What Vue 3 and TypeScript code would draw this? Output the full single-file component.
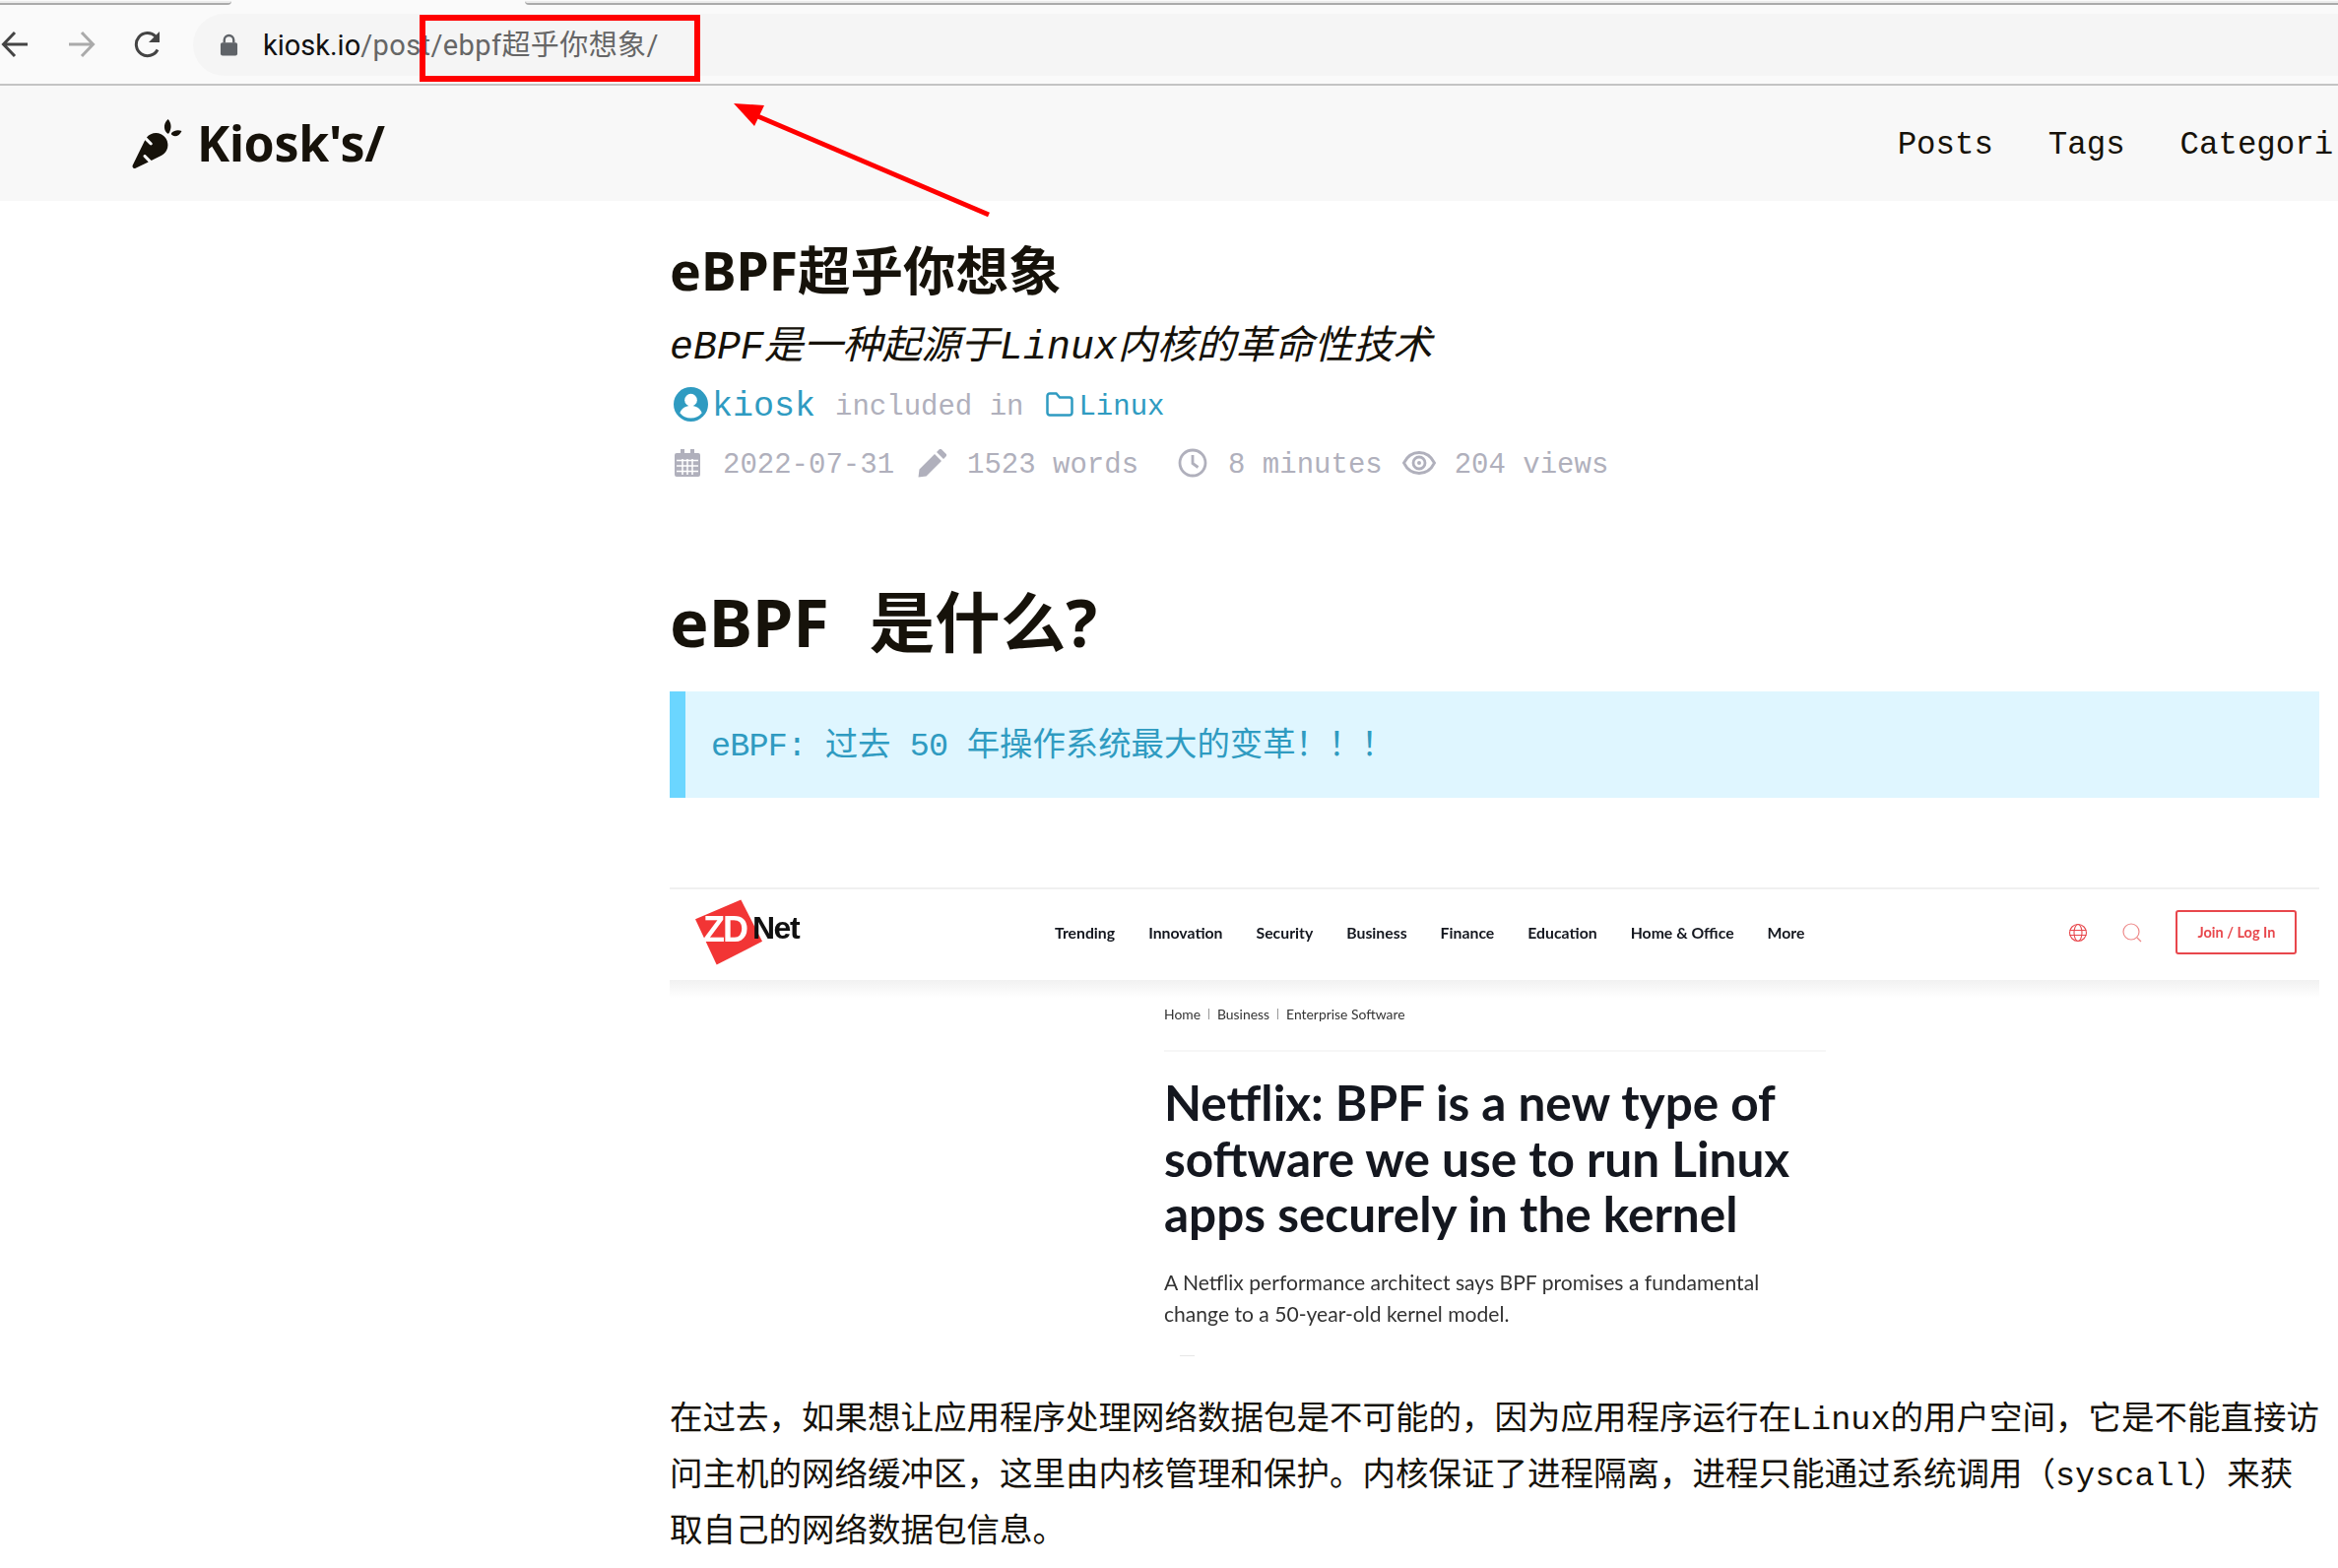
<script setup lang="ts">
const navItems: string[] = ['Posts', 'Tags', 'Categories']
const zdItems: string[] = ['Trending', 'Innovation', 'Security', 'Business', 'Finance', 'Education', 'Home & Office', 'More']
</script>

<template>
  <div class="page">
    <div class="tabstrip">
      <div class="tab-side tab-left"></div>
      <div class="tab-active"></div>
      <div class="tab-side tab-right"></div>
    </div>
    <div class="toolbar">
      <svg class="tb-icon back" viewBox="0 0 28 28"><path d="M27 14H3M14 2 2.500 14 14 26" fill="none" stroke="#444" stroke-width="3" /></svg>
      <svg class="tb-icon forward" viewBox="0 0 28 28"><path d="M1 14h24M14 2l11.500 12L14 26" fill="none" stroke="#aaa" stroke-width="3" /></svg>
      <svg class="tb-icon reload" viewBox="0 0 30 28"><path d="M25 19.500A11.500 11.500 0 1 1 23 6" fill="none" stroke="#444" stroke-width="3" /><path d="M27 1v11H16z" fill="#444" /></svg>
      <div class="omnibox">
        <svg class="lock" viewBox="0 0 20 24"><path d="M5 10V7a5 5 0 0 1 10 0v3" fill="none" stroke="#5f6368" stroke-width="2.500" /><rect x="1" y="9.500" width="18" height="14" rx="2" fill="#5f6368" /></svg>
        <span class="url"><span class="url-host">kiosk.io</span><span class="url-path">/post/ebpf超乎你想象/</span></span>
      </div>
    </div>

    <header class="site-header">
      <a class="logo">
        <svg class="carrot" viewBox="0 0 512 512"><path d="M298.200 156.600c-52.700-25.700-114.500-10.500-150.200 32.800l55.200 55.200c6.200 6.200 6.200 16.400 0 22.600-3.100 3.100-7.200 4.700-11.300 4.700s-8.200-1.600-11.300-4.700L130.400 217 2.300 479.700c-2.900 6-3.100 13.300 0 19.700 5.400 11.100 18.900 15.700 30 10.300l133.600-65.200-49.200-49.200c-6.200-6.200-6.200-16.400 0-22.600 6.200-6.200 16.400-6.200 22.600 0l57 57 102-49.800c24-11.700 44.500-31.300 57.100-57.100 30.100-61.700 4.500-136.100-57.200-166.200z" fill="#16120a" /><path d="M390.300 121.700C409.800 81 399.700 32.900 370.600 0c-43.500 36.800-51.100 97.100-17.200 139.200 10 12 24 22 36.900-17.500zM512 121.600c-38-14-80-6-104 18-8 9-4 20 6 27 33 22 76 5 98-45z" fill="#16120a" /></svg>
        <span class="logo-text">Kiosk's/</span>
      </a>
      <nav class="site-nav">
        <a v-for="item in navItems" :key="item">{{ item }}</a>
      </nav>
    </header>

    <main class="content">
      <h1 class="title">eBPF超乎你想象</h1>
      <div class="subtitle">eBPF是一种起源于Linux内核的革命性技术</div>
      <div class="meta-author">
        <svg class="author-icon" viewBox="0 0 36 36"><circle cx="18" cy="18" r="18" fill="#2f9bc1" /><circle cx="18" cy="13.500" r="6.500" fill="#fff" /><path d="M6.500 27c2-5.500 6-7.500 11.500-7.500S27.500 21.500 29.500 27A15 15 0 0 1 18 32.500 15 15 0 0 1 6.500 27z" fill="#fff" /></svg>
        <span class="author-name">kiosk</span>
        <span class="included">included in</span>
        <svg class="folder" viewBox="0 0 28 25"><path d="M1.500 4A2.500 2.500 0 0 1 4 1.500h6.500l3.500 4h10A2.500 2.500 0 0 1 26.500 8v13a2.500 2.500 0 0 1-2.500 2.500H4A2.500 2.500 0 0 1 1.500 21z" fill="none" stroke="#2f9bc1" stroke-width="2.500" /></svg>
        <span class="category">Linux</span>
      </div>
      <div class="meta-stats">
        <svg class="stat-icon calendar" viewBox="0 0 26 29"><path d="M2 5h4V1h4v4h6V1h4v4h4a2 2 0 0 1 2 2v20a2 2 0 0 1-2 2H2a2 2 0 0 1-2-2V7a2 2 0 0 1 2-2z" fill="#b0b0bc" /><path d="M2 12.500h22M2 18h22M2 23.500h22M8 11v16M13 11v16M18 11v16" stroke="#fff" stroke-width="1.500" /></svg>
        <span class="stat date">2022-07-31</span>
        <svg class="stat-icon pencil" viewBox="0 0 29 29"><path d="M17 5l7 7L8.500 27.500 0.500 28.500l1-8zM19 3l2.500-2.500a2 2 0 0 1 2.800 0L28.500 4.700a2 2 0 0 1 0 2.800L26 10z" fill="#b0b0bc" /></svg>
        <span class="stat words">1523 words</span>
        <svg class="stat-icon clock" viewBox="0 0 30 30"><circle cx="15" cy="15" r="13" fill="none" stroke="#b0b0bc" stroke-width="2.800" /><path d="M15 7v8.500l5.500 4" fill="none" stroke="#b0b0bc" stroke-width="2.800" /></svg>
        <span class="stat minutes">8 minutes</span>
        <svg class="stat-icon eye" viewBox="0 0 34 24"><path d="M1.500 12C5 5 10.500 1.500 17 1.500S29 5 32.500 12C29 19 23.500 22.500 17 22.500S5 19 1.500 12z" fill="none" stroke="#b0b0bc" stroke-width="2.800" /><circle cx="17" cy="12" r="6" fill="none" stroke="#b0b0bc" stroke-width="2.800" /><circle cx="17" cy="12" r="2" fill="#b0b0bc" /></svg>
        <span class="stat views">204 views</span>
      </div>

      <h2 class="heading"><span class="heading-latin">eBPF</span>是什么?</h2>

      <blockquote class="quote"><span class="quote-text"><span class="quote-latin">eBPF: </span>过去<span class="quote-latin"> 50 </span>年操作系统最大的变革！！！</span></blockquote>

      <figure class="shot">
        <div class="zd-header">
          <div class="zd-logo">
            <svg class="zd-diamond" viewBox="0 0 70 68"><path d="M47 0 0 20 22 67 69 43z" fill="#f23535" /></svg>
            <span class="zd-mark">ZD</span><span class="zd-net">Net</span>
          </div>
          <div class="zd-nav">
            <span v-for="item in zdItems" :key="item">{{ item }}</span>
          </div>
          <svg class="zd-globe" viewBox="0 0 20 20"><g fill="none" stroke="#e8474c" stroke-width="1.100"><circle cx="10" cy="10" r="8.500" /><ellipse cx="10" cy="10" rx="4" ry="8.500" /><path d="M1.500 7.500h17M1.500 12.500h17" /></g></svg>
          <svg class="zd-search" viewBox="0 0 22 22"><g fill="none" stroke="#ee8a8a" stroke-width="1.200"><circle cx="10" cy="10" r="8" /><path d="M16 16l4 4" /></g></svg>
          <div class="zd-join">Join / Log In</div>
        </div>
        <div class="zd-shadow"></div>
        <div class="zd-article">
          <div class="zd-crumbs"><span>Home</span><i></i><span>Business</span><i></i><span>Enterprise Software</span></div>
          <div class="zd-rule"></div>
          <div class="zd-headline">Netflix: BPF is a new type of<br />software we use to run Linux<br />apps securely in the kernel</div>
          <div class="zd-sub">A Netflix performance architect says BPF promises a fundamental<br />change to a 50-year-old kernel model.</div>
          <div class="zd-tick"></div>
        </div>
      </figure>

      <p class="body-text">在过去，如果想让应用程序处理网络数据包是不可能的，因为应用程序运行在Linux的用户空间，它是不能直接访问主机的网络缓冲区，这里由内核管理和保护。内核保证了进程隔离，进程只能通过系统调用（syscall）来获取自己的网络数据包信息。</p>
    </main>

    <div class="note-box"></div>
    <svg class="note-arrow" viewBox="0 0 2374 300"><path d="M1004 218 760 114" stroke="#f00" stroke-width="5" fill="none" /><path d="M745 105 776 107 766 128z" fill="#f00" /></svg>
  </div>
</template>

<style>
html, body { margin: 0; background: #fff; overflow: hidden; }
</style>

<style scoped>
.page {
  position: relative;
  width: 2374px;
  height: 1592px;
  overflow: hidden;
  background: #fff;
  font-family: "Liberation Mono", "Noto Sans CJK SC", monospace;
  color: #16120a;
}
.tabstrip { display: flex; height: 5px; background: #fafafa; }
.tab-side { height: 2px; margin-top: 1px; border-bottom: 2px solid #aaa; background: #ececec; }
.tab-left { width: 235px; border-bottom-right-radius: 8px; }
.tab-active { width: 298px; }
.tab-right { flex: 1; border-bottom-left-radius: 8px; }
.toolbar {
  display: flex;
  align-items: center;
  height: 80px;
  background: #fafafa;
  border-bottom: 2px solid #c4c4c4;
}
.tb-icon { flex: none; width: 28px; height: 28px; }
.back { margin-left: 1px; }
.forward { margin-left: 40px; }
.reload { width: 30px; margin-left: 38px; }
.omnibox {
  flex: 1;
  display: flex;
  align-items: center;
  height: 63px;
  margin-left: 31px;
  padding-left: 27px;
  background: #f5f5f5;
  border-radius: 32px 0 0 32px;
}
.lock { width: 19px; height: 23px; flex: none; }
.url {
  margin-left: 25px;
  padding-top: 2px;
  font: 29px/1 Roboto, "Noto Sans CJK SC", sans-serif;
  color: #666;
  white-space: nowrap;
}
.url-host { color: #111; }
.url-path { letter-spacing: 0.400px; }

.site-header {
  display: flex;
  align-items: center;
  height: 117px;
  padding-left: 133px;
  background: #f8f8f8;
}
.logo { display: flex; align-items: center; gap: 14px; }
.carrot { width: 53px; height: 50px; flex: none; }
.logo-text { padding-bottom: 2px; font: 700 50px/1 "Noto Sans", sans-serif; letter-spacing: -0.300px; }
.site-nav {
  display: flex;
  flex: none;
  gap: 56px;
  margin-left: auto;
  margin-right: -34px;
  padding-top: 5px;
  font-size: 32.400px;
  line-height: 1;
  clip-path: inset(0 39px 0 0);
}

.content { width: 1675px; margin-left: 680px; }
.title {
  margin: 36px 0 0;
  font: 700 53.500px/70px "Noto Sans", "Noto Sans CJK SC", sans-serif;
}
.subtitle { margin-top: 19px; font-size: 39.900px; line-height: 50px; font-style: italic; }
.meta-author { display: flex; align-items: center; height: 40px; margin-top: 11px; color: #2f9bc1; }
.author-icon { width: 35px; height: 35px; margin-left: 4px; flex: none; }
.author-name { margin: 6px 0 0 4px; font-size: 35px; }
.included { margin: 7px 0 0 20px; font-size: 29px; color: #b0b0bc; }
.folder { width: 28px; height: 25px; margin-left: 23px; flex: none; }
.category { margin: 7px 0 0 5px; font-size: 29px; }
.meta-stats { display: flex; align-items: center; height: 40px; margin-top: 20px; color: #b0b0bc; font-size: 29px; }
.stat { margin-top: 5px; }
.calendar { width: 26px; height: 29px; margin: -2px 0 0 5px; }
.date { margin-left: 23px; }
.pencil { width: 29px; height: 29px; margin-left: 24px; }
.words { margin-left: 21px; }
.clock { width: 30px; height: 30px; margin-left: 40px; margin-top: -1px; }
.minutes { margin-left: 21px; }
.eye { width: 34px; height: 24px; margin-left: 20px; }
.views { margin-left: 19px; }
.stat-icon { flex: none; }

.heading {
  margin: 96px 0 0;
  font: 700 66.500px/90px "Noto Sans", "Noto Sans CJK SC", sans-serif;
}
.heading-latin { margin-right: 41px; }
.quote {
  display: flex;
  align-items: center;
  box-sizing: border-box;
  height: 108px;
  margin: 26px 0 0;
  padding: 0 0 8px 26px;
  background: #dff6ff;
  border-left: 16px solid #6bd6ff;
  color: #2f9bc1;
  font-size: 33.400px;
}
.quote-text { white-space: pre; }
.quote-latin { letter-spacing: -0.750px; }

.shot {
  margin: 91px 0 0;
  height: 490px;
  border-top: 2px solid #f0f0f0;
  font-family: Lato, "Noto Sans", sans-serif;
  color: #14171f;
  filter: blur(0.3px);
}
.zd-header { display: flex; align-items: center; box-sizing: border-box; height: 92px; padding-bottom: 5px; }
.zd-logo { position: relative; width: 131px; height: 68px; margin-left: 26px; flex: none; }
.zd-diamond { position: absolute; left: 0; top: 0; width: 69px; height: 68px; }
.zd-mark {
  position: absolute;
  left: 8px;
  top: 13px;
  font: 700 36px/1 "Liberation Sans", sans-serif;
  letter-spacing: -2px;
  color: #fff;
}
.zd-net {
  position: absolute;
  left: 58px;
  top: 13px;
  font: 700 32px/1 "Liberation Sans", sans-serif;
  letter-spacing: -1.500px;
  color: #111;
}
.zd-nav { display: flex; flex: none; gap: 34px; margin-left: 234px; font-size: 15.800px; font-weight: 700; white-space: nowrap; }
.zd-globe { flex: none; width: 20px; height: 20px; margin-left: 268px; }
.zd-search { flex: none; width: 22px; height: 22px; margin-left: 34px; }
.zd-join {
  flex: none;
  box-sizing: border-box;
  width: 123px;
  height: 45px;
  margin-left: 33px;
  border: 2px solid #e8474c;
  border-radius: 3px;
  color: #e8474c;
  font-size: 14.500px;
  font-weight: 700;
  line-height: 41px;
  text-align: center;
}
.zd-shadow { height: 18px; background: linear-gradient(#f1f1f1, #fff); }
.zd-article { width: 672px; margin-left: 502px; }
.zd-crumbs { display: flex; align-items: center; gap: 8px; margin-top: 8px; font-size: 13.900px; color: #333; white-space: nowrap; }
.zd-crumbs i { width: 1px; height: 11px; background: #999; }
.zd-rule { height: 2px; margin-top: 28px; background: #f6f6f6; }
.zd-headline { margin-top: 23px; font-size: 49.500px; font-weight: 700; line-height: 56.500px; white-space: nowrap; }
.zd-sub { margin-top: 25px; font-size: 21.100px; line-height: 32px; color: #333; white-space: nowrap; }
.zd-tick { width: 15px; height: 1px; margin: 26px 0 0 16px; background: #e6e6e6; }

.body-text { margin: 21px 0 0; font-size: 33.500px; line-height: 57px; }

.note-box {
  position: absolute;
  left: 426px;
  top: 15px;
  box-sizing: border-box;
  width: 285px;
  height: 68px;
  border: 6px solid #f00;
}
.note-arrow { position: absolute; left: 0; top: 0; width: 2374px; height: 300px; }
</style>
